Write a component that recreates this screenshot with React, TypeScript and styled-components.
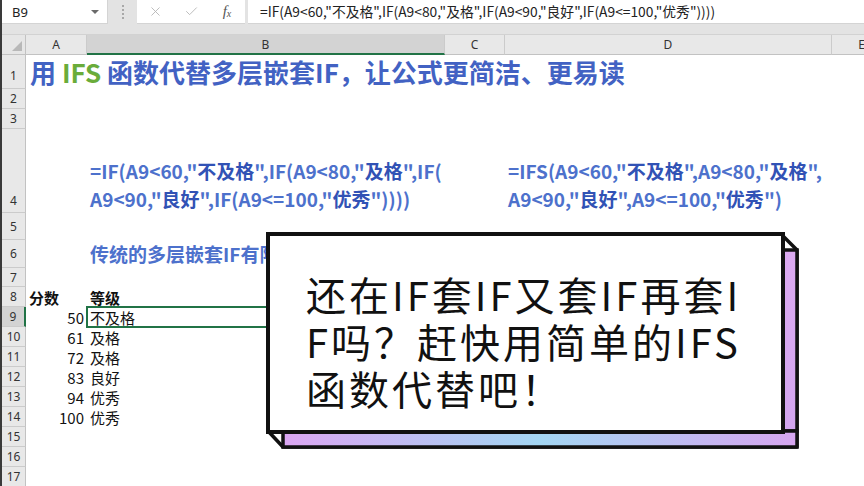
import React from "react";
import styled, { createGlobalStyle, css } from "styled-components";
import { X, Check } from "lucide-react";

const GlobalStyle = createGlobalStyle`
  html, body {
    margin: 0;
    padding: 0;
    background: #fff;
  }
  body {
    width: 864px;
    height: 486px;
    overflow: hidden;
    font-family: "Noto Sans CJK SC", "Noto Sans", sans-serif;
  }
`;

const GREEN = "#217346";

const COLUMNS = [
  { name: "A", width: 61 },
  { name: "B", width: 358 },
  { name: "C", width: 60 },
  { name: "D", width: 327 },
  { name: "E", width: 60 },
];

// rows 1..17, Excel keeps its own heights for the title and the wrapped formula row
const ROW_HEIGHTS = [34, 20, 20, 84, 27, 28, 19, 20, 20, 20, 20, 20, 20, 20, 20, 20, 20];

const SELECTED_ROW = 9;
const SELECTED_COL = "B";

const FORMULA =
  '=IF(A9<60,"不及格",IF(A9<80,"及格",IF(A9<90,"良好",IF(A9<=100,"优秀"))))';

const IF_LINES = ['=IF(A9<60,"不及格",IF(A9<80,"及格",IF(', 'A9<90,"良好",IF(A9<=100,"优秀"))))'];
const IFS_LINES = ['=IFS(A9<60,"不及格",A9<80,"及格",', 'A9<90,"良好",A9<=100,"优秀")'];

const SCORES: [number, string][] = [
  [50, "不及格"],
  [61, "及格"],
  [72, "及格"],
  [83, "良好"],
  [94, "优秀"],
  [100, "优秀"],
];

const CARD_LINES = ["还在IF套IF又套IF再套I", "F吗？赶快用简单的IFS", "函数代替吧！"];

function renderFormula(line: string) {
  return line.split(/([\u4e00-\u9fff]+)/).map((part, i) =>
    /[\u4e00-\u9fff]/.test(part) ? <Quoted key={i}>{part}</Quoted> : <span key={i}>{part}</span>
  );
}

function App(): JSX.Element {
  return (
    <>
      <GlobalStyle />
      <Page>
        <FormulaBar>
          <NameBox>
            <span>B9</span>
            <DropArrow />
          </NameBox>
          <Grip />
          <ButtonGroup>
            <IconButton>
              <X size={15} strokeWidth={1.4} color="#b4b4b4" />
            </IconButton>
            <IconButton>
              <Check size={15} strokeWidth={1.4} color="#b4b4b4" />
            </IconButton>
            <IconButton>
              <Fx>
                f<sub>x</sub>
              </Fx>
            </IconButton>
          </ButtonGroup>
          <FormulaInput>{FORMULA}</FormulaInput>
        </FormulaBar>

        <Sheet>
          <Corner>
            <svg width="10" height="10" viewBox="0 0 10 10">
              <polygon points="10,0 10,10 0,10" fill="#b8b8b8" />
            </svg>
          </Corner>
          {COLUMNS.map((c) => (
            <ColHead key={c.name} $selected={c.name === SELECTED_COL}>
              {c.name}
            </ColHead>
          ))}
          {ROW_HEIGHTS.map((_, i) => (
            <RowHead key={i} $row={i + 1} $selected={i + 1 === SELECTED_ROW}>
              {i + 1}
            </RowHead>
          ))}

          <TitleCell $row={1} $col={1} $span={5}>
            用&nbsp;<Accent>IFS</Accent>&nbsp;函数代替多层嵌套IF，让公式更简洁、更易读
          </TitleCell>

          <FormulaCell $row={4} $col={2}>
            {IF_LINES.map((l) => (
              <div key={l}>{renderFormula(l)}</div>
            ))}
          </FormulaCell>
          <FormulaCell $row={4} $col={4}>
            {IFS_LINES.map((l) => (
              <div key={l}>{renderFormula(l)}</div>
            ))}
          </FormulaCell>

          <NoteCell $row={6} $col={2} $span={3}>
            传统的多层嵌套IF有限制
          </NoteCell>

          <HeadCell $row={8} $col={1}>
            分数
          </HeadCell>
          <HeadCell $row={8} $col={2}>
            等级
          </HeadCell>
          {SCORES.map(([score, grade], i) => (
            <React.Fragment key={i}>
              <Cell $row={9 + i} $col={1} $align="right">
                {score}
              </Cell>
              <Cell $row={9 + i} $col={2} $selected={9 + i === SELECTED_ROW}>
                {grade}
              </Cell>
            </React.Fragment>
          ))}
        </Sheet>

        <Card>
          <Extrusion width="540" height="224" viewBox="0 0 540 224">
            <defs>
              <linearGradient id="bottomGlow" x1="0" x2="1" y1="0" y2="0">
                <stop offset="0" stopColor="#dba6f2" />
                <stop offset="0.5" stopColor="#a3d6f3" />
                <stop offset="1" stopColor="#d7a6f0" />
              </linearGradient>
              <linearGradient id="sideGlow" x1="0" x2="0" y1="0" y2="1">
                <stop offset="0" stopColor="#dcaaf1" />
                <stop offset="1" stopColor="#d3a6ef" />
              </linearGradient>
            </defs>
            <polygon
              points="515,2 531,18 531,215 17,215 2,199"
              fill="#fff"
              stroke="#111"
              strokeWidth="3.5"
              strokeLinejoin="round"
            />
            <rect x="515" y="18" width="16" height="181" fill="url(#sideGlow)" stroke="#111" strokeWidth="3.5" />
            <rect x="17" y="199" width="514" height="16" fill="url(#bottomGlow)" stroke="#111" strokeWidth="3.5" />
          </Extrusion>
          <CardFace>
            {CARD_LINES.map((l) => (
              <CardLine key={l}>{l}</CardLine>
            ))}
          </CardFace>
        </Card>
      </Page>
    </>
  );
}

export default App;

const Page = styled.div`
  position: relative;
  width: 864px;
  height: 486px;
  overflow: hidden;
  box-sizing: border-box;
  border-left: 2px solid #3a3a3a;
  background: #fff;
`;

const FormulaBar = styled.div`
  display: flex;
  align-items: flex-start;
  height: 35px;
  background: #e3e3e3;
  box-sizing: border-box;
  border-bottom: 1px solid #d2d2d2;
`;

const NameBox = styled.div`
  display: flex;
  align-items: center;
  justify-content: space-between;
  width: 106px;
  height: 24px;
  box-sizing: border-box;
  padding: 0 8px 0 10px;
  background: #fff;
  border-right: 1px solid #d4d4d4;
  border-bottom: 1px solid #d4d4d4;
  font-family: "Noto Sans", sans-serif;
  font-size: 13px;
  color: #222;
`;

const DropArrow = styled.span`
  width: 0;
  height: 0;
  border-left: 4px solid transparent;
  border-right: 4px solid transparent;
  border-top: 4px solid #6a6a6a;
`;

const Grip = styled.div`
  width: 29px;
  height: 24px;
  display: flex;
  justify-content: center;
  align-items: center;
  &::before {
    content: "";
    height: 14px;
    border-left: 2px dotted #a8a8a8;
  }
`;

const ButtonGroup = styled.div`
  display: flex;
  width: 108px;
  height: 24px;
  background: #fff;
  border-bottom: 1px solid #d4d4d4;
  box-sizing: border-box;
`;

const IconButton = styled.div`
  width: 36px;
  display: flex;
  align-items: center;
  justify-content: center;
`;

const Fx = styled.span`
  font-family: "Liberation Serif", serif;
  font-style: italic;
  font-size: 15px;
  color: #555;
  sub {
    font-size: 10px;
    vertical-align: -1px;
  }
`;

const FormulaInput = styled.div`
  flex: 1;
  margin-left: 3px;
  height: 24px;
  box-sizing: border-box;
  padding-left: 12px;
  background: #fff;
  border-bottom: 1px solid #d4d4d4;
  font-size: 13.8px;
  line-height: 23px;
  color: #222;
  white-space: nowrap;
`;

const Sheet = styled.div`
  display: grid;
  grid-template-columns: 24px ${COLUMNS.map((c) => `${c.width}px`).join(" ")};
  grid-template-rows: 20px ${ROW_HEIGHTS.map((h) => `${h}px`).join(" ")};
`;

const Corner = styled.div`
  grid-row: 1;
  grid-column: 1;
  display: flex;
  align-items: flex-end;
  justify-content: flex-end;
  padding: 0 3px 3px 0;
  background: #e6e6e6;
  border-right: 1px solid #c2c2c2;
  border-bottom: 1px solid #c2c2c2;
`;

const ColHead = styled.div<{ $selected?: boolean }>`
  grid-row: 1;
  display: flex;
  align-items: center;
  justify-content: center;
  box-sizing: border-box;
  background: ${(p) => (p.$selected ? "#d3d3d3" : "#e8e8e8")};
  border-right: 1px solid #cbcbcb;
  border-bottom: ${(p) => (p.$selected ? `2px solid ${GREEN}` : "1px solid #c2c2c2")};
  font-family: "Noto Sans", sans-serif;
  font-size: 12px;
  color: #333;
`;

const RowHead = styled.div<{ $row: number; $selected?: boolean }>`
  grid-row: ${(p) => p.$row + 1};
  grid-column: 1;
  display: flex;
  align-items: center;
  justify-content: center;
  padding-top: ${(p) => (p.$row === 4 ? "60px" : p.$row === 1 ? "8px" : "0")};
  box-sizing: border-box;
  background: ${(p) => (p.$selected ? "#d3d3d3" : "#e8e8e8")};
  border-bottom: 1px solid #cbcbcb;
  border-right: ${(p) => (p.$selected ? `2px solid ${GREEN}` : "1px solid #c2c2c2")};
  font-family: "Noto Sans", sans-serif;
  font-size: 12px;
  color: #333;
`;

const Cell = styled.div<{
  $row: number;
  $col: number;
  $span?: number;
  $align?: "left" | "right";
  $selected?: boolean;
}>`
  grid-row: ${(p) => p.$row + 1};
  grid-column: ${(p) => p.$col + 1} / span ${(p) => p.$span ?? 1};
  display: flex;
  align-items: flex-end;
  justify-content: ${(p) => (p.$align === "right" ? "flex-end" : "flex-start")};
  min-width: 0;
  padding: 0 3px 0 3px;
  white-space: nowrap;
  font-size: 15px;
  line-height: 19px;
  color: #111;
  ${(p) =>
    p.$selected &&
    css`
      outline: 2px solid ${GREEN};
      outline-offset: -1px;
    `}
`;

const HeadCell = styled(Cell)`
  font-weight: 700;
`;

const TitleCell = styled(Cell)`
  padding-left: 4px;
  font-size: 26px;
  font-weight: 700;
  line-height: 34px;
  color: #4262c3;
`;

const Accent = styled.span`
  color: #6aac3a;
`;

const FormulaCell = styled(Cell)`
  flex-direction: column;
  justify-content: flex-end;
  align-items: flex-start;
  font-size: 19px;
  font-weight: 700;
  line-height: 28px;
  color: #4d71cc;
`;

const Quoted = styled.span`
  color: #3152b5;
`;

const NoteCell = styled(Cell)`
  font-size: 19px;
  font-weight: 700;
  line-height: 28px;
  color: #4d71cc;
`;

const Card = styled.div`
  position: absolute;
  left: 264px;
  top: 232px;
  width: 540px;
  height: 224px;
`;

const Extrusion = styled.svg`
  position: absolute;
  left: 0;
  top: 0;
  overflow: visible;
`;

const CardFace = styled.div`
  position: relative;
  width: 519px;
  height: 202px;
  box-sizing: border-box;
  padding: 35px 0 0 36px;
  background: #fff;
  border: 4px solid #111;
`;

const CardLine = styled.div`
  font-size: 40px;
  line-height: 47px;
  letter-spacing: 3px;
  color: #111;
  white-space: nowrap;
`;
